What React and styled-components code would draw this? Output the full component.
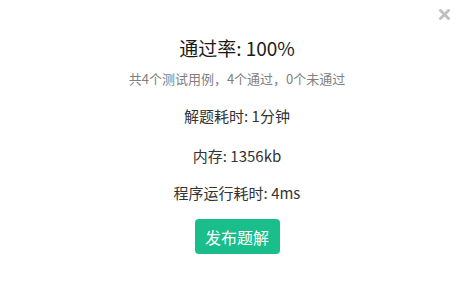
import React from "react";
import styled, { createGlobalStyle } from "styled-components";

const Global = createGlobalStyle`
  html, body { margin: 0; padding: 0; background: #fff; }
  body { font-family: "Noto Sans CJK SC", "Noto Sans", sans-serif; }
`;

const Dialog = styled.div`
  position: relative;
  width: 474px;
  height: 288px;
  background: #fff;
  box-sizing: border-box;
  display: flex;
  flex-direction: column;
  align-items: center;
  padding-top: 35px;
`;

const Close = styled.button`
  position: absolute;
  top: 8px;
  right: 24px;
  width: 12px;
  height: 12px;
  padding: 0;
  border: none;
  background: transparent;
  display: flex;
  align-items: center;
  justify-content: center;
  cursor: pointer;
`;

const Title = styled.div`
  font-size: 19px;
  line-height: 26px;
  color: #1a1a1a;
`;

const Summary = styled.div`
  margin-top: 8px;
  font-size: 13px;
  line-height: 20px;
  color: #808080;
`;

const Stat = styled.div`
  margin-top: ${(p) => p.$gap}px;
  font-size: 15px;
  line-height: 22px;
  color: #333;
`;

const Publish = styled.button`
  margin-top: 15px;
  width: 85px;
  height: 35px;
  border: none;
  border-radius: 4px;
  background: #19be8b;
  color: #fff;
  font-family: inherit;
  font-size: 16px;
  cursor: pointer;
`;

export default function App() {
  return (
    <>
      <Global />
      <Dialog>
        <Close aria-label="关闭">
          <svg width="11" height="11" viewBox="0 0 11 11">
            <path d="M1.5 1.5 L9.5 9.5 M9.5 1.5 L1.5 9.5" stroke="#c0c0c0" strokeWidth="3" strokeLinecap="round" />
          </svg>
        </Close>
        <Title>通过率: 100%</Title>
        <Summary>共4个测试用例，4个通过，0个未通过</Summary>
        <Stat $gap={16}>解题耗时: 1分钟</Stat>
        <Stat $gap={18}>内存: 1356kb</Stat>
        <Stat $gap={15}>程序运行耗时: 4ms</Stat>
        <Publish>发布题解</Publish>
      </Dialog>
    </>
  );
}
